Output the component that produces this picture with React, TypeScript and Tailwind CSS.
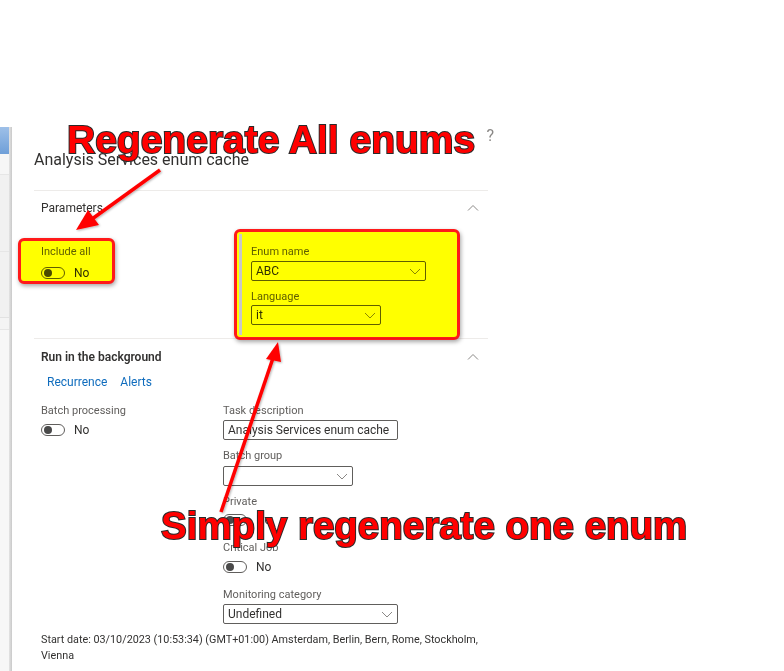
import React from "react";

const Toggle = () => (
  <div className="flex items-center h-[20px]">
    <div className="w-[24px] h-[12px] rounded-full border border-[#605e5c] flex items-center pl-[2px]">
      <div className="w-[8px] h-[8px] rounded-full bg-[#4a4a4a]"></div>
    </div>
    <span className="ml-[9px] text-[12px] text-[#323130]">No</span>
  </div>
);

const Chevron = ({ up }: { up?: boolean }) => (
  <svg width="12" height="7" viewBox="0 0 12 7" className="text-[#8a8886]">
    {up ? (
      <path d="M1 6.5 L6 1.5 L11 6.5" fill="none" stroke="currentColor" strokeWidth="1" />
    ) : (
      <path d="M1 1 L6 6 L11 1" fill="none" stroke="currentColor" strokeWidth="1" />
    )}
  </svg>
);

const Select = ({ w, value }: { w: string; value?: string }) => (
  <div className={`${w} h-[20px] border border-[#605e5c] rounded-[2px] flex items-center justify-between pl-[4px] pr-[4px]`}>
    <span className="text-[12px] text-[#323130] leading-none">{value}</span>
    <Chevron />
  </div>
);

const Label = ({ children }: { children: React.ReactNode }) => (
  <div className="h-[16px] leading-[16px] text-[11px] text-[#605e5c]">{children}</div>
);

const annot =
  "absolute whitespace-nowrap font-bold leading-none text-[#ff0000] [font-family:'Liberation_Sans',Arial,sans-serif] [-webkit-text-stroke:2px_#2a2a2a] [paint-order:stroke_fill]";

const App: React.FC = () => {
  return (
    <div className="relative w-[784px] h-[671px] overflow-hidden bg-white [font-family:Roboto,sans-serif]">
      <div className="h-[127px]"></div>
      <div className="flex h-[544px]">
        {/* background page strip */}
        <div className="w-[12px] flex">
          <div className="w-[9px] bg-[#f4f4f4] flex flex-col">
            <div className="h-[27px] bg-gradient-to-b from-[#9ec0e8] to-[#6f9fd8]"></div>
            <div className="h-[21px] bg-[#f6f6f6] border-b border-[#e6e6e6]"></div>
            <div className="h-[77px] bg-[#f1f1f1] border-b border-[#e6e6e6]"></div>
            <div className="h-[66px] bg-[#f1f1f1] border-b border-[#e2e2e2]"></div>
            <div className="h-[12px] bg-[#f4f4f4] border-b border-[#e6e6e6]"></div>
            <div className="flex-1 bg-[#f7f7f7]"></div>
          </div>
          <div className="w-[3px] bg-gradient-to-r from-[#e4e4e4] to-[#c9c9c9]"></div>
        </div>
        {/* panel */}
        <div className="flex-1 bg-white pl-[22px]">
          <div className="w-[454px]">
            <div className="h-[18px] flex justify-end">
              <span className="text-[16px] leading-[18px] text-[#8a8886] mr-[-6px]">?</span>
            </div>
            <div className="mt-[5px] h-[20px] leading-[20px] text-[16px] text-[#323130]">
              Analysis Services enum cache
            </div>
            <div className="mt-[20px] border-t border-[#edebe9]"></div>
            {/* Parameters */}
            <div className="h-[33px] flex items-center justify-between pl-[7px] pr-[9px]">
              <span className="text-[12px] text-[#323130]">Parameters</span>
              <Chevron up />
            </div>
            <div className="flex h-[114px] pt-[20px]">
              <div className="w-[217px] pl-[7px]">
                <Label>Include all</Label>
                <div className="mt-[3px]">
                  <Toggle />
                </div>
              </div>
              <div>
                <Label>Enum name</Label>
                <div className="mt-[1px]">
                  <Select w="w-[175px]" value="ABC" />
                </div>
                <div className="mt-[8px]">
                  <Label>Language</Label>
                </div>
                <Select w="w-[130px]" value="it" />
              </div>
            </div>
            <div className="border-t border-[#edebe9]"></div>
            {/* Run in the background */}
            <div className="h-[35px] flex items-center justify-between pl-[7px] pr-[9px]">
              <span className="text-[12px] font-semibold text-[#323130]">Run in the background</span>
              <Chevron up />
            </div>
            <div className="flex gap-[13px] pl-[13px] h-[16px] items-center text-[12px] text-[#0f6cbd]">
              <span>Recurrence</span>
              <span>Alerts</span>
            </div>
            <div className="flex mt-[13px]">
              <div className="w-[189px] pl-[7px]">
                <Label>Batch processing</Label>
                <div className="mt-[1px]">
                  <Toggle />
                </div>
              </div>
              <div className="flex flex-col">
                <Label>Task description</Label>
                <div className="mt-[1px] w-[175px] h-[20px] border border-[#605e5c] rounded-[2px] flex items-center pl-[4px]">
                  <span className="text-[12px] text-[#323130] leading-none whitespace-nowrap">Analysis Services enum cache</span>
                </div>
                <div className="mt-[8px]">
                  <Label>Batch group</Label>
                </div>
                <div className="mt-[2px]">
                  <Select w="w-[130px]" />
                </div>
                <div className="mt-[8px]">
                  <Label>Private</Label>
                </div>
                <Toggle />
                <div className="mt-[10px]">
                  <Label>Critical Job</Label>
                </div>
                <div className="mt-[1px]">
                  <Toggle />
                </div>
                <div className="mt-[10px]">
                  <Label>Monitoring category</Label>
                </div>
                <div className="mt-[1px]">
                  <Select w="w-[175px]" value="Undefined" />
                </div>
              </div>
            </div>
            <div className="mt-[8px] pl-[7px] text-[10.8px] leading-[16px] text-[#323130] whitespace-nowrap">
              Start date: 03/10/2023 (10:53:34) (GMT+01:00) Amsterdam, Berlin, Bern, Rome, Stockholm,
              <br />
              Vienna
            </div>
          </div>
        </div>
      </div>

      {/* highlight boxes */}
      <div className="absolute left-[18px] top-[238px] w-[97px] h-[46px] rounded-[6px] border-[3px] border-[#ff1a1a] bg-[#ffff00] mix-blend-multiply shadow-[1px_2px_4px_rgba(0,0,0,0.35)]"></div>
      <div className="absolute left-[234px] top-[229px] w-[226px] h-[111px] rounded-[6px] border-[3px] border-[#ff1a1a] bg-[#ffff00] mix-blend-multiply shadow-[1px_2px_4px_rgba(0,0,0,0.35)]">
        <div className="absolute left-[2px] top-[2px] bottom-[2px] w-[3px] bg-[#c8c8c8]"></div>
      </div>

      {/* arrows */}
      <svg className="absolute left-0 top-0" width="784" height="671" viewBox="0 0 784 671">
        <defs>
          <filter id="sh" x="-20%" y="-20%" width="140%" height="140%">
            <feDropShadow dx="1" dy="1" stdDeviation="1" floodColor="#000" floodOpacity="0.3" />
          </filter>
        </defs>
        <g filter="url(#sh)" fill="#ff0000" stroke="#ff0000">
          <line x1="160" y1="170" x2="92" y2="219" strokeWidth="3.5" />
          <polygon points="76,230 88,210 99,225" stroke="none" />
          <line x1="221" y1="512" x2="273" y2="358" strokeWidth="3.5" />
          <polygon points="278,342 266,359 281,362" stroke="none" />
        </g>
      </svg>

      {/* annotation texts */}
      <div className={`${annot} text-[39px] left-[67px] top-[120px]`}>Regenerate All enums</div>
      <div className={`${annot} text-[38.5px] left-[161px] top-[507px]`}>Simply regenerate one enum</div>
    </div>
  );
};

export default App;
